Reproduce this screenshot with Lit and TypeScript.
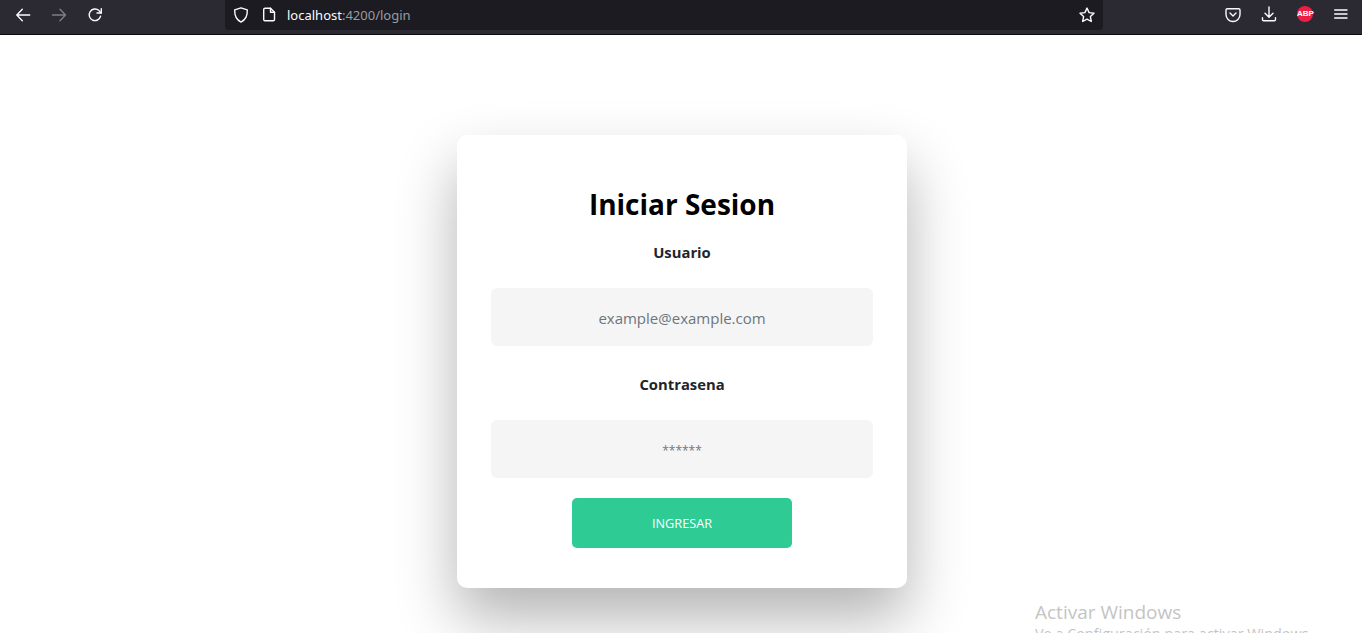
import { LitElement, html, css, svg } from 'lit';
import { customElement } from 'lit/decorators.js';

const icon = (body: unknown, extra = '') => html`
  <svg class="icon ${extra}" viewBox="0 0 16 16" fill="none" stroke="currentColor" stroke-width="1.4"
    stroke-linecap="round" stroke-linejoin="round">${body}</svg>
`;

const back = svg`<path d="M14.700 8H1.800M7.300 2.300 1.800 8l5.500 5.700" />`;
const forward = svg`<path d="M1.500 8H14.500M9 2.300 14.500 8 9 13.700" />`;
const reload = svg`<path d="M13.600 9.200A5.800 5.800 0 1 1 12 3.600L14 6" /><path d="M14.300 1.600V6H10" />`;
const shield = svg`<path d="M8 .8 14.300 2.800c.3 5.800-1.600 9.900-6.300 12.300C3.300 12.700 1.400 8.600 1.700 2.800z" />`;
const page = svg`<path d="M1.700 2.500C1.700 1.700 2.300 1.200 3 1.200H8.500L12.500 5.200V12.500c0 .8-.6 1.300-1.300 1.300H3c-.7 0-1.300-.5-1.300-1.300z" /><path d="M8.500 1.200V5.200H12.500" />`;
const star = svg`<path d="m8 1.100 2.100 4.500 4.900.6-3.600 3.400.9 4.900L8 12.100l-4.300 2.400.9-4.900L1 6.200l4.900-.6z" />`;
const pocket = svg`<path d="M2.300 1.800h11.400c.7 0 1.300.6 1.300 1.300V7.500a7 7 0 0 1-14 0V3.100C1 2.400 1.600 1.800 2.300 1.800z" /><path d="m5 6 3 3 3-3" />`;
const download = svg`<path d="M8 0v10M4 6.200l4 4 4-4" /><path d="M1.500 10.800v1.700c0 .7.500 1.200 1.200 1.200h10.600c.7 0 1.200-.5 1.200-1.200v-1.700" />`;
const menu = svg`<path d="M1.700 3h12.300M1.700 7h12.300M1.700 11h12.300" />`;

@customElement('app-root')
export class AppRoot extends LitElement {
  static styles = css`
    :host {
      display: block;
      position: relative;
      height: 633px;
      overflow: hidden;
      background: #fff;
      font-family: 'Open Sans', 'Noto Sans', sans-serif;
      color: #000;
    }

    .toolbar {
      display: flex;
      align-items: flex-start;
      height: 34px;
      background: #2b2a33;
      border-bottom: 1px solid #0c0c0d;
      color: #fbfbfe;
    }

    .icon {
      width: 16px;
      height: 16px;
      flex: none;
      display: block;
      overflow: visible;
    }

    .nav {
      display: flex;
      gap: 20px;
      width: 225px;
      padding: 7px 0 0 15px;
      box-sizing: border-box;
    }

    .dim {
      opacity: 0.4;
    }

    .urlbar {
      display: flex;
      align-items: center;
      width: 878px;
      height: 30px;
      box-sizing: border-box;
      padding: 0 8px;
      background: #1c1b22;
      border-radius: 0 0 4px 4px;
      font-size: 13px;
    }

    .shield {
      margin-right: 13px;
    }

    .url {
      margin-left: 9px;
      flex: 1;
      font-family: 'Noto Sans', sans-serif;
      font-size: 13px;
      color: #fbfbfe;
    }

    .url span {
      color: #9b9ba0;
    }

    .actions {
      display: flex;
      align-items: flex-start;
      gap: 20px;
      padding: 7px 0 0 122px;
    }

    .abp {
      width: 16px;
      height: 16px;
      margin-top: -1px;
      border-radius: 50%;
      background: #ed1e45;
      color: #fff;
      font: 700 8px/16px 'Liberation Sans', sans-serif;
      text-align: center;
    }

    main {
      display: flex;
      justify-content: center;
      padding: 100px 0 0 2px;
    }

    .card {
      display: flex;
      flex-direction: column;
      align-items: center;
      width: 450px;
      height: 453px;
      box-sizing: border-box;
      padding: 50px 34px 40px;
      background: #fff;
      border-radius: 10px;
      box-shadow: 0 30px 60px rgba(0, 0, 0, 0.3);
    }

    h1 {
      margin: 0;
      font-size: 28px;
      line-height: 38px;
      font-weight: 700;
    }

    label {
      font-size: 14.800px;
      font-weight: 700;
      line-height: 20px;
      color: #212529;
    }

    .first {
      margin-top: 19px;
    }

    .second {
      margin-top: 28px;
    }

    input {
      display: block;
      width: 382px;
      height: 58px;
      box-sizing: border-box;
      margin-top: 26px;
      padding: 2px 0 0;
      border: 0;
      border-radius: 6px;
      background: #f5f5f5;
      text-align: center;
      font: 400 15px 'Open Sans', sans-serif;
      outline: none;
    }

    input::placeholder {
      color: #6c757d;
      opacity: 1;
    }

    input[type='password'] {
      font-size: 12px;
    }

    button {
      width: 220px;
      height: 50px;
      margin-top: 20px;
      border: 0;
      border-radius: 5px;
      background: #2ecc94;
      color: #fff;
      font: 400 12.700px 'Open Sans', sans-serif;
    }

    .watermark {
      position: absolute;
      left: 1035px;
      top: 600px;
      color: #c4c4c4;
      white-space: nowrap;
    }

    .watermark .big {
      font-size: 19px;
      line-height: 24px;
    }

    .watermark .small {
      font-size: 14.400px;
      line-height: 19px;
    }
  `;

  render() {
    return html`
      <div class="toolbar">
        <div class="nav">
          ${icon(back)} ${icon(forward, 'dim')} ${icon(reload)}
        </div>
        <div class="urlbar">
          ${icon(shield, 'shield')} ${icon(page)}
          <div class="url">localhost<span>:4200/login</span></div>
          ${icon(star)}
        </div>
        <div class="actions">
          ${icon(pocket)} ${icon(download)}
          <div class="abp">ABP</div>
          ${icon(menu)}
        </div>
      </div>
      <main>
        <form class="card">
          <h1>Iniciar Sesion</h1>
          <label class="first">Usuario</label>
          <input type="text" placeholder="example@example.com" />
          <label class="second">Contrasena</label>
          <input type="password" placeholder="******" />
          <button type="button">INGRESAR</button>
        </form>
      </main>
      <div class="watermark">
        <div class="big">Activar Windows</div>
        <div class="small">Ve a Configuración para activar Windows.</div>
      </div>
    `;
  }
}
